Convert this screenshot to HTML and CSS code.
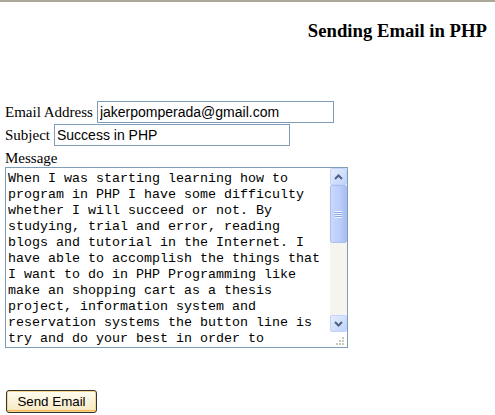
FILE: index.html
```html
<!DOCTYPE html>
<html lang="en">
<head>
    <meta charset="UTF-8">
    <title>Sending Email in PHP</title>
    <link rel="stylesheet" href="styles.css">
</head>
<body>
    <div class="topline"></div>
    <h1 class="title">Sending Email in PHP</h1>

    <form class="mail-form" onsubmit="return false;">
        <div class="row">
            <label for="email">Email Address</label>
            <input id="email" class="field field-email" type="text" value="jakerpomperada@gmail.com">
        </div>
        <div class="row">
            <label for="subject">Subject</label>
            <input id="subject" class="field field-subject" type="text" value="Success in PHP">
        </div>
        <label class="msg-label" for="message">Message</label>
        <div class="msgbox">
            <textarea id="message" class="message" cols="40" rows="11">When I was starting learning how to program in PHP I have some difficulty whether I will succeed or not. By studying, trial and error, reading blogs and tutorial in the Internet. I have able to accomplish the things that I want to do in PHP Programming like make an shopping cart as a thesis project, information system and reservation systems the button line is try and do your best in order to succeed.</textarea>
            <div class="scrollbar">
                <div class="sb-btn">
                    <svg viewBox="0 0 9 6" width="9" height="6"><path d="M1 5 L4.5 1.5 L8 5" fill="none" stroke="#4d6185" stroke-width="2"/></svg>
                </div>
                <div class="sb-track">
                    <div class="sb-thumb">
                        <span class="grip"></span>
                    </div>
                </div>
                <div class="sb-btn">
                    <svg viewBox="0 0 9 6" width="9" height="6"><path d="M1 1 L4.5 4.5 L8 1" fill="none" stroke="#4d6185" stroke-width="2"/></svg>
                </div>
                <div class="resizer">
                    <svg viewBox="0 0 15 15" width="15" height="15">
                        <rect x="11" y="5" width="2" height="2" fill="#c9c6ba"/>
                        <rect x="8" y="8" width="2" height="2" fill="#c9c6ba"/>
                        <rect x="11" y="8" width="2" height="2" fill="#c9c6ba"/>
                        <rect x="5" y="11" width="2" height="2" fill="#c9c6ba"/>
                        <rect x="8" y="11" width="2" height="2" fill="#c9c6ba"/>
                        <rect x="11" y="11" width="2" height="2" fill="#c9c6ba"/>
                    </svg>
                </div>
            </div>
        </div>
        <button class="send-button" type="submit">Send Email</button>
    </form>
</body>
</html>
```

FILE: styles.css
```css
* {
    box-sizing: border-box;
}

body {
    margin: 0;
    background: #ffffff;
    color: #000000;
    font-family: "Liberation Serif", "Times New Roman", serif;
    font-size: 15px;
}

.topline {
    height: 2px;
    background: #aca899;
}

.title {
    margin: 18px 0 0;
    padding-right: 8px;
    font-size: 18.7px;
    line-height: 22px;
    font-weight: bold;
    text-align: right;
}

.mail-form {
    display: flex;
    flex-direction: column;
    align-items: flex-start;
    padding: 59px 0 0 5px;
}

.row {
    display: flex;
    align-items: center;
    gap: 4px;
    height: 22px;
    margin-bottom: 1px;
}

.row label,
.msg-label {
    line-height: 18px;
}

.field {
    height: 22px;
    border: 1px solid #7f9db9;
    padding: 1px 2px;
    font-family: "Liberation Sans", Arial, sans-serif;
    font-size: 14px;
    color: #000000;
    outline: none;
}

.field-email {
    width: 237px;
}

.field-subject {
    width: 236px;
}

.msg-label {
    margin-top: 2px;
}

.msgbox {
    display: flex;
    width: 343px;
    height: 181px;
    border: 1px solid #7f9db9;
}

.message {
    width: 324px;
    height: 100%;
    margin: 0;
    border: none;
    padding: 3px 6px 0 2px;
    resize: none;
    overflow: hidden;
    font-family: "Liberation Mono", "Courier New", monospace;
    font-size: 13.33px;
    line-height: 16px;
    color: #000000;
    outline: none;
}

.scrollbar {
    display: flex;
    flex-direction: column;
    width: 17px;
    background: #f7f6f1;
}

.sb-btn {
    display: flex;
    align-items: center;
    justify-content: center;
    height: 17px;
    border: 1px solid #c3d3fd;
    border-radius: 2px;
    background: linear-gradient(135deg, #e6eefc, #c1d3fb);
}

.sb-track {
    flex: 1;
    background: #f5f4ef;
}

.sb-thumb {
    display: flex;
    align-items: center;
    justify-content: center;
    height: 58px;
    border: 1px solid #a9bff0;
    border-radius: 2px;
    background: linear-gradient(90deg, #cad8fc, #b9cdfa 60%, #a9bff3);
}

.grip {
    width: 7px;
    height: 7px;
    background: repeating-linear-gradient(180deg, #eef3fe 0 1px, #8fa9e8 1px 2px);
}

.resizer {
    height: 15px;
    background: #ffffff;
}

.resizer svg {
    display: block;
    margin-left: 1px;
}

.send-button {
    width: 91px;
    height: 23px;
    margin: 42px 0 0 1px;
    border: 1px solid #2e3436;
    border-radius: 3px;
    background: linear-gradient(180deg, #fffdf3, #f6e7bf);
    box-shadow: inset 0 0 0 1px #fbd38a, inset 0 -2px 0 #f5b94f;
    font-family: "Liberation Sans", Arial, sans-serif;
    font-size: 13.33px;
    color: #000000;
    padding: 0;
}
```
